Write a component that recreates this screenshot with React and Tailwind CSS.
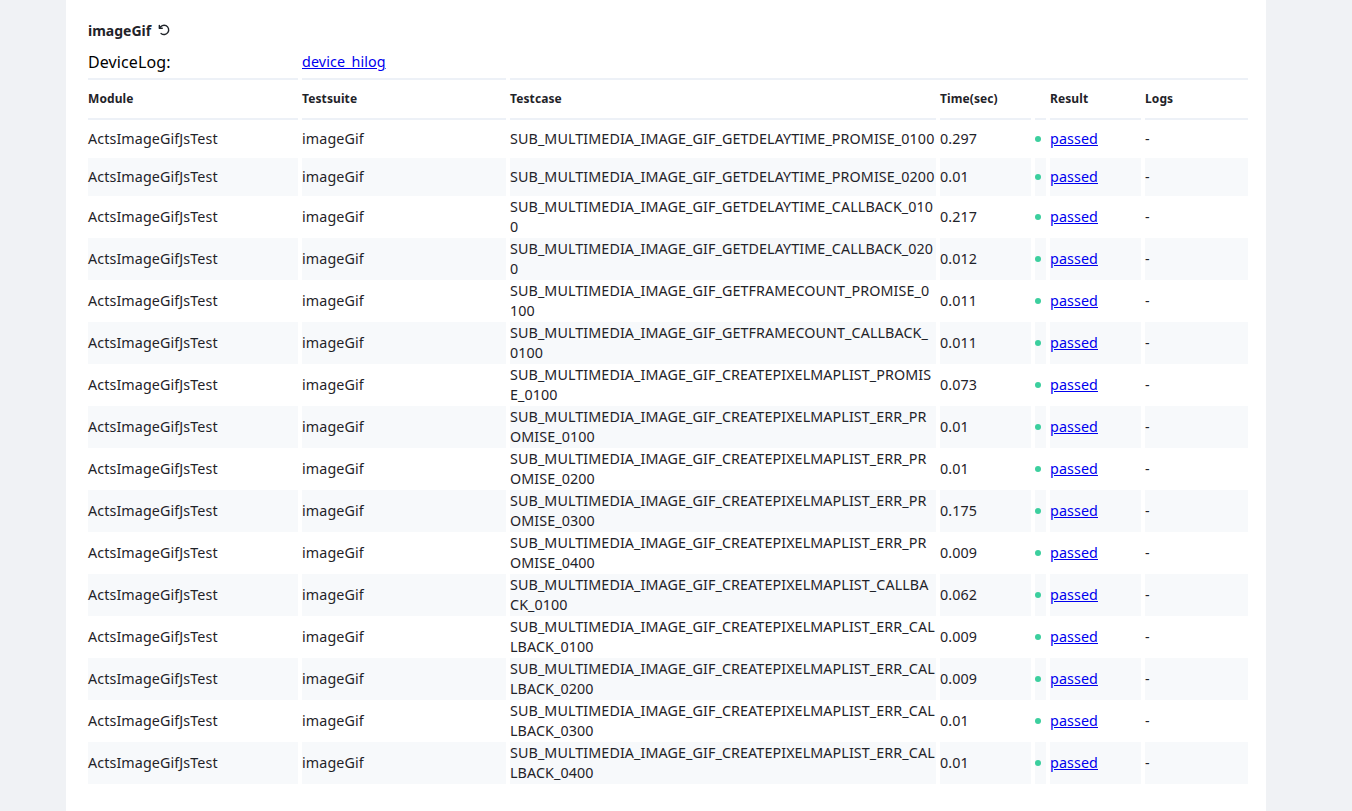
const rows = [
["SUB_MULTIMEDIA_IMAGE_GIF_GETDELAYTIME_PROMISE_0100","0.297"],
["SUB_MULTIMEDIA_IMAGE_GIF_GETDELAYTIME_PROMISE_0200","0.01"],
["SUB_MULTIMEDIA_IMAGE_GIF_GETDELAYTIME_CALLBACK_0100","0.217"],
["SUB_MULTIMEDIA_IMAGE_GIF_GETDELAYTIME_CALLBACK_0200","0.012"],
["SUB_MULTIMEDIA_IMAGE_GIF_GETFRAMECOUNT_PROMISE_0100","0.011"],
["SUB_MULTIMEDIA_IMAGE_GIF_GETFRAMECOUNT_CALLBACK_0100","0.011"],
["SUB_MULTIMEDIA_IMAGE_GIF_CREATEPIXELMAPLIST_PROMISE_0100","0.073"],
["SUB_MULTIMEDIA_IMAGE_GIF_CREATEPIXELMAPLIST_ERR_PROMISE_0100","0.01"],
["SUB_MULTIMEDIA_IMAGE_GIF_CREATEPIXELMAPLIST_ERR_PROMISE_0200","0.01"],
["SUB_MULTIMEDIA_IMAGE_GIF_CREATEPIXELMAPLIST_ERR_PROMISE_0300","0.175"],
["SUB_MULTIMEDIA_IMAGE_GIF_CREATEPIXELMAPLIST_ERR_PROMISE_0400","0.009"],
["SUB_MULTIMEDIA_IMAGE_GIF_CREATEPIXELMAPLIST_CALLBACK_0100","0.062"],
["SUB_MULTIMEDIA_IMAGE_GIF_CREATEPIXELMAPLIST_ERR_CALLBACK_0100","0.009"],
["SUB_MULTIMEDIA_IMAGE_GIF_CREATEPIXELMAPLIST_ERR_CALLBACK_0200","0.009"],
["SUB_MULTIMEDIA_IMAGE_GIF_CREATEPIXELMAPLIST_ERR_CALLBACK_0300","0.01"],
["SUB_MULTIMEDIA_IMAGE_GIF_CREATEPIXELMAPLIST_ERR_CALLBACK_0400","0.01"],
];
export default function App(){
  const f={fontFamily:'"Noto Sans","Open Sans",sans-serif'};
  return (
  <div className="min-h-[811px] bg-[#f0f2f5] text-[#1f2329]" style={f}>
    <div className="ml-[66px] w-[1200px] min-h-[811px] bg-white px-[20px] pt-[16px]">
      <div className="flex items-center gap-[6px] h-[28px] text-[14px] font-bold pl-[2px]">imageGif
        <svg width="14" height="14" viewBox="0 0 24 24" fill="none" stroke="#1f2329" strokeWidth="2.4" strokeLinecap="round" strokeLinejoin="round"><path d="M4 4v5h5"/><path d="M4.5 9A8 8 0 1 1 7 18"/></svg>
      </div>
      <table className="-ml-[2px] border-separate border-spacing-x-[4px] border-spacing-y-0 text-[14.3px] tracking-[0.1px] table-fixed w-[1164px]">
        <colgroup><col className="w-[210px]"/><col className="w-[204px]"/><col className="w-[426px]"/><col className="w-[91px]"/><col className="w-[11px]"/><col className="w-[91px]"/><col className="w-[103px]"/></colgroup>
        <thead>
          <tr className="h-[36px]">
            <td className="text-[16px] text-black border-b-2 border-[#edf1f7] pt-[2px]">DeviceLog:</td>
            <td className="border-b-2 border-[#edf1f7] pt-[2px]"><a href="#" className="text-[#0000ee] underline">device_hilog</a></td>
            <td colSpan="5" className="border-b-2 border-[#edf1f7]"></td>
          </tr>
          <tr className="h-[40px] text-[12px] font-bold text-left">
            {["Module","Testsuite","Testcase","Time(sec)"].map(h=><th key={h} className="text-left border-b-2 border-[#edf1f7]">{h}</th>)}
            <th className="border-b-2 border-[#edf1f7]"></th>
            <th className="text-left border-b-2 border-[#edf1f7]">Result</th>
            <th className="text-left border-b-2 border-[#edf1f7]">Logs</th>
          </tr>
        </thead>
        <tbody>
          {rows.map(([tc,t],i)=>{
            const bg=(i%2? "bg-[#f7f9fb]":"")+" py-[1px]";
            return (
            <tr key={i} className={"h-[38px] leading-[20px]"}>
              <td className={bg}>ActsImageGifJsTest</td>
              <td className={bg}>imageGif</td>
              <td className={bg+" break-all"}>{tc}</td>
              <td className={bg}>{t}</td>
              <td className={bg}><span className="block w-[6px] h-[6px] rounded-full bg-[#3ccf9e]"></span></td>
              <td className={bg}><a href="#" className="text-[#0000ee] underline">passed</a></td>
              <td className={bg}>-</td>
            </tr>);
          })}
        </tbody>
      </table>
    </div>
  </div>);
}
